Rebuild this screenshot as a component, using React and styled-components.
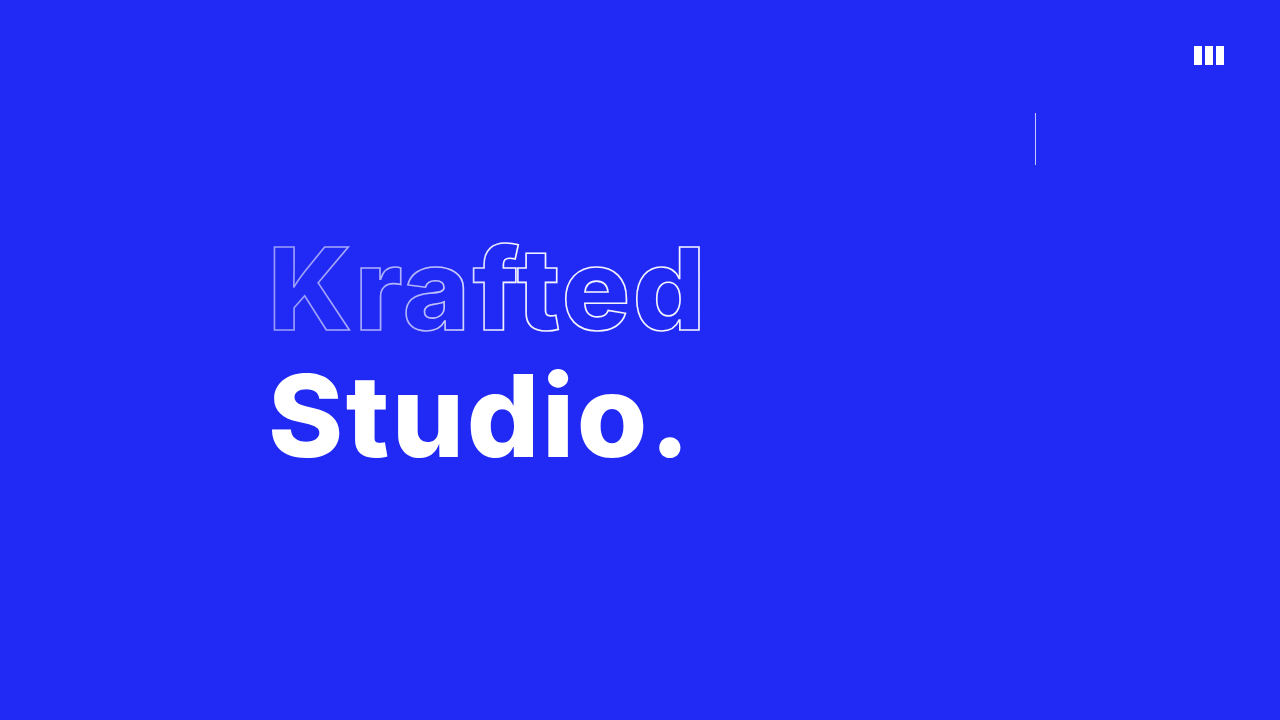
import React from "react";
import styled, { createGlobalStyle } from "styled-components";

const GlobalStyle = createGlobalStyle`
  html, body {
    margin: 0;
    padding: 0;
    background: #2129f4;
  }
  body {
    font-family: Inter, "Liberation Sans", sans-serif;
  }
`;

const Page = styled.main`
  min-height: 100vh;
  background: #2129f4;
  display: flex;
  flex-direction: column;
  overflow: hidden;
`;

const Header = styled.header`
  display: flex;
  justify-content: flex-end;
  padding: 46px 56px 0 0;
`;

const MenuButton = styled.button`
  display: flex;
  gap: 3px;
  padding: 0;
  border: none;
  background: transparent;
  cursor: pointer;
  span {
    display: block;
    width: 8px;
    height: 19px;
    background: #ffffff;
  }
`;

const Divider = styled.div`
  width: 1px;
  height: 52px;
  margin: 48px 0 0 1035px;
  background: rgba(255, 255, 255, 0.75);
`;

const Title = styled.h1`
  margin: 60px 0 0;
  padding-left: 268px;
  font-family: Inter, "Liberation Sans", sans-serif;
  font-size: 114px;
  line-height: 127px;
  font-weight: 800;
`;

const Line = styled.span`
  display: block;
  width: max-content;
  letter-spacing: ${(p) => p.$spacing}px;
  color: ${(p) => (p.$outline ? "transparent" : "#ffffff")};
  -webkit-text-stroke: ${(p) =>
    p.$outline ? "1.6px rgba(255, 255, 255, 0.95)" : "0"};
  ${(p) =>
    p.$outline &&
    `
    -webkit-mask-image: linear-gradient(90deg, rgba(0,0,0,0.55) 0%, rgba(0,0,0,0.7) 35%, #000 55%);
    mask-image: linear-gradient(90deg, rgba(0,0,0,0.55) 0%, rgba(0,0,0,0.7) 35%, #000 55%);
  `}
`;

const App = () => {
  return (
    <Page>
      <GlobalStyle />
      <Header>
        <MenuButton aria-label="Menu">
          <span />
          <span />
          <span />
        </MenuButton>
      </Header>
      <Divider />
      <Title>
        <Line $outline $spacing={2.5}>
          Krafted
        </Line>
        <Line $spacing={2.5}>Studio.</Line>
      </Title>
    </Page>
  );
};

export default App;
